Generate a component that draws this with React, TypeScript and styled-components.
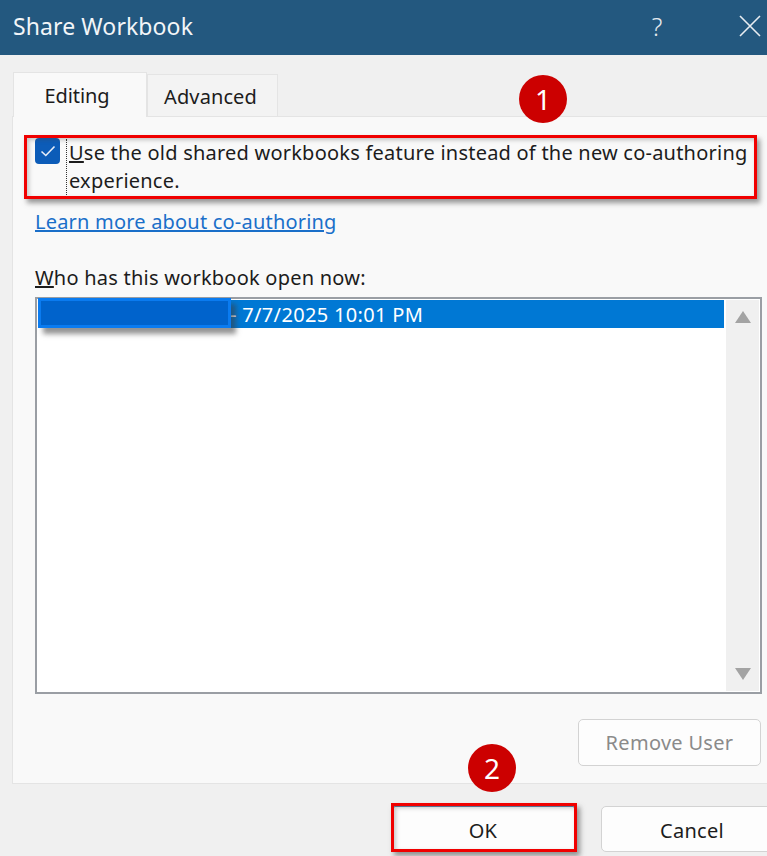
import React from "react";
import styled, { createGlobalStyle } from "styled-components";

const GlobalStyle = createGlobalStyle`
  html, body {
    margin: 0;
    padding: 0;
    background: #f0f0f0;
  }
  body {
    font-family: "Noto Sans", "Open Sans", sans-serif;
    color: #1c1c1c;
  }
`;

const Dialog = styled.div`
  width: 767px;
  height: 856px;
  overflow: hidden;
  display: flex;
  flex-direction: column;
  position: relative;
  background: #f0f0f0;
`;

const TitleBar = styled.header`
  height: 55px;
  flex: none;
  box-sizing: border-box;
  display: flex;
  align-items: center;
  background: #23587f;
  color: #f2f5f8;
  padding: 0 6px 4px 13px;
`;

const Title = styled.h1`
  flex: 1;
  margin: 0;
  font-size: 23px;
  font-weight: 400;
  letter-spacing: 0.1px;
`;

const HelpButton = styled.span`
  font-size: 25px;
  font-weight: 300;
  width: 24px;
  margin-right: 70px;
  text-align: center;
  color: #e4eaef;
`;

const Tabs = styled.div`
  display: flex;
  align-items: flex-end;
  height: 61px;
  flex: none;
  padding-left: 13px;
  box-sizing: border-box;
`;

const Tab = styled.div<{ $active?: boolean }>`
  box-sizing: border-box;
  display: flex;
  justify-content: center;
  font-size: 20px;
  letter-spacing: ${(p) => (p.$active ? "-0.1px" : "0.1px")};
  border: 1px solid #e4e4e4;
  border-bottom: none;
  background: ${(p) => (p.$active ? "#f9f9f9" : "#f3f3f3")};
  width: ${(p) => (p.$active ? "134px" : "131px")};
  height: ${(p) => (p.$active ? "45px" : "42px")};
  padding-top: ${(p) => (p.$active ? "9px" : "8px")};
  padding-right: ${(p) => (p.$active ? "6px" : "4px")};
  margin-bottom: ${(p) => (p.$active ? "-1px" : "0")};
  position: relative;
  z-index: ${(p) => (p.$active ? 1 : 0)};
  line-height: 27px;
`;

const Panel = styled.section`
  box-sizing: border-box;
  margin-left: 12px;
  height: 668px;
  flex: none;
  background: #f9f9f9;
  border: 1px solid #e4e4e4;
  border-right: none;
  padding: 19px 5px 0 22px;
  display: flex;
  flex-direction: column;
`;

const CheckRow = styled.div`
  display: flex;
  align-items: flex-start;
  gap: 6px;
  position: relative;
`;

const CheckBox = styled.span`
  width: 25px;
  height: 26px;
  flex: none;
  border-radius: 4px;
  background: #0c5cb8;
  display: flex;
  align-items: center;
  justify-content: center;
  margin-top: 2px;
`;

const CheckLabel = styled.div`
  font-size: 20px;
  line-height: 28px;
  letter-spacing: 0.22px;
  white-space: nowrap;
  border-left: 1px dotted #333;
  padding-left: 2px;
  height: 56px;
  margin-top: 3px;
`;

const LearnLink = styled.a`
  font-size: 20px;
  line-height: 28px;
  letter-spacing: 0.2px;
  color: #1a6fc9;
  text-decoration: underline;
  margin-top: 13px;
  align-self: flex-start;
`;

const ListLabel = styled.div`
  font-size: 20px;
  line-height: 28px;
  letter-spacing: 0.23px;
  margin-top: 28px;
`;

const UserList = styled.div`
  box-sizing: border-box;
  width: 727px;
  height: 397px;
  margin-top: 5px;
  background: #fff;
  border: 2px solid #9a9ea4;
  padding: 1px;
  display: flex;
  gap: 2px;
  position: relative;
`;

const Rows = styled.div`
  flex: 1;
  min-width: 0;
`;

const UserRow = styled.div`
  height: 28px;
  background: #0078d4;
  color: #fff;
  font-size: 20px;
  line-height: 30px;
  letter-spacing: 0.33px;
  padding-left: 192px;
  white-space: nowrap;
`;

const Redaction = styled.div`
  position: absolute;
  left: 1px;
  top: -1px;
  width: 193px;
  height: 30px;
  box-sizing: border-box;
  background: #0063cc;
  border: 3px solid #0a7bf0;
  box-shadow: 5px 6px 5px rgba(60, 60, 60, 0.55);
`;

const ScrollBar = styled.div`
  width: 33px;
  flex: none;
  display: flex;
  flex-direction: column;
  justify-content: space-between;
  align-items: center;
  background: #f0f0f0;
  padding: 11px 0 11px;
  box-sizing: border-box;
`;

const Arrow = styled.span<{ $down?: boolean }>`
  width: 0;
  height: 0;
  border-left: 8px solid transparent;
  border-right: 8px solid transparent;
  ${(p) =>
    p.$down ? "border-top: 12px solid #a3a3a3;" : "border-bottom: 12px solid #a3a3a3;"}
`;

const PanelActions = styled.div`
  display: flex;
  justify-content: flex-end;
  margin-top: 25px;
  margin-right: 1px;
`;

const Button = styled.button<{ $disabled?: boolean }>`
  box-sizing: border-box;
  height: 47px;
  flex: none;
  background: #fdfdfd;
  border: 1px solid #d3d3d3;
  border-radius: 5px;
  font: inherit;
  font-size: 20px;
  letter-spacing: 0.3px;
  color: ${(p) => (p.$disabled ? "#8a8a8a" : "#1c1c1c")};
  padding: 0;
`;

const RemoveButton = styled(Button)`
  width: 183px;
`;

const Footer = styled.footer`
  display: flex;
  align-items: flex-start;
  padding: 22px 0 0 393px;
`;

const OkButton = styled(Button)`
  width: 182px;
  height: 45px;
  border-radius: 2px;
  border-color: #5a7fa8;
  padding-top: 3px;
  padding-right: 2px;
`;

const CancelButton = styled(Button)`
  width: 182px;
  height: 46px;
  margin-left: 26px;
  padding-top: 2px;
`;

const Highlight = styled.div<{ $x: number; $y: number; $w: number; $h: number }>`
  position: absolute;
  box-sizing: border-box;
  left: ${(p) => p.$x}px;
  top: ${(p) => p.$y}px;
  width: ${(p) => p.$w}px;
  height: ${(p) => p.$h}px;
  border: 3px solid #f00000;
  box-shadow: 3px 4px 5px rgba(70, 70, 70, 0.55), inset 2px 2px 4px rgba(70, 70, 70, 0.3);
  pointer-events: none;
`;

const Badge = styled.div<{ $x: number; $y: number }>`
  position: absolute;
  left: ${(p) => p.$x}px;
  top: ${(p) => p.$y}px;
  width: 48px;
  height: 48px;
  border-radius: 50%;
  background: #cc0000;
  color: #fff;
  font-size: 28px;
  line-height: 48px;
  text-align: center;
`;

export default function App() {
  return (
    <Dialog>
      <GlobalStyle />
      <TitleBar>
        <Title>Share Workbook</Title>
        <HelpButton>?</HelpButton>
        <svg width="22" height="22" viewBox="0 0 22 22" fill="none" stroke="#e8edf1" strokeWidth="1.6">
          <path d="M1 1 L21 21 M21 1 L1 21" />
        </svg>
      </TitleBar>

      <Tabs>
        <Tab $active>Editing</Tab>
        <Tab>Advanced</Tab>
      </Tabs>

      <Panel>
        <CheckRow>
          <CheckBox>
            <svg width="16" height="12" viewBox="0 0 16 12" fill="none" stroke="#e8eef8" strokeWidth="1.6">
              <path d="M1.5 6.5 L5.8 10.5 L14.5 1.5" />
            </svg>
          </CheckBox>
          <CheckLabel>
            <u>U</u>se the old shared workbooks feature instead of the new co-authoring
            <br />
            experience.
          </CheckLabel>
        </CheckRow>
        <LearnLink>Learn more about co-authoring</LearnLink>
        <ListLabel>
          <u>W</u>ho has this workbook open now:
        </ListLabel>
        <UserList>
          <Rows>
            <UserRow>- 7/7/2025 10:01 PM</UserRow>
          </Rows>
          <Redaction />
          <ScrollBar>
            <Arrow />
            <Arrow $down />
          </ScrollBar>
        </UserList>
        <PanelActions>
          <RemoveButton $disabled>Remove User</RemoveButton>
        </PanelActions>
      </Panel>

      <Footer>
        <OkButton>OK</OkButton>
        <CancelButton>Cancel</CancelButton>
      </Footer>

      <Highlight $x={24} $y={135} $w={733} $h={64} />
      <Highlight $x={391} $y={803} $w={186} $h={49} />
      <Badge $x={519} $y={75}>1</Badge>
      <Badge $x={468} $y={744}>2</Badge>
    </Dialog>
  );
}
